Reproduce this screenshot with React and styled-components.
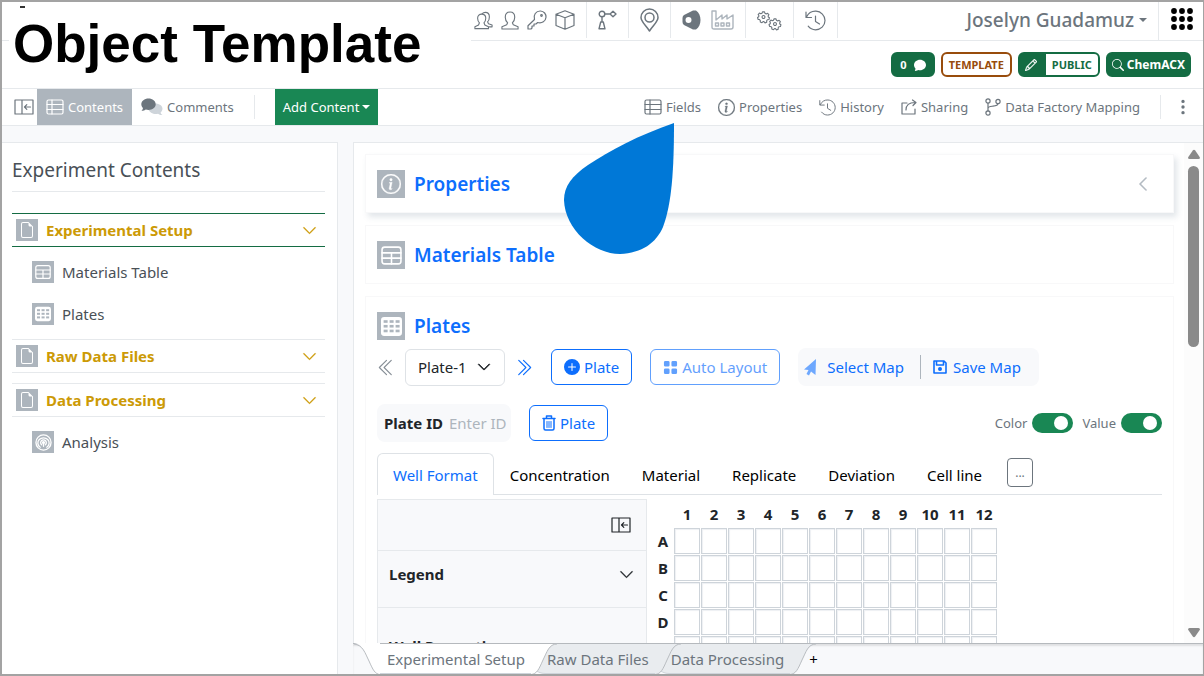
import React, { useState } from 'react';
import styled, { createGlobalStyle } from 'styled-components';
import {
    BsSearch,
    BsPencil,
    BsChatFill,
    BsChevronDown,
    BsChevronLeft,
    BsChevronDoubleLeft,
    BsChevronDoubleRight,
    BsPlusCircleFill,
    BsInfoCircle,
    BsThreeDotsVertical,
    BsGridFill,
    BsFileEarmark,
} from 'react-icons/bs';

const colors = {
    frame: '#a3a3a3',
    line: '#e6e9ec',
    gray: '#6c757d',
    iconBg: '#adb5bd',
    light: '#f8f9fb',
    green: '#198754',
    darkGreen: '#146c43',
    gold: '#cc9a06',
    blue: '#0d6efd',
    text: '#212529',
};

const GlobalStyle = createGlobalStyle`
    * { box-sizing: border-box; }
    body {
        margin: 0;
        background: #ffffff;
        color: ${colors.text};
        font-family: "Noto Sans", "Open Sans", sans-serif;
        font-size: 15px;
    }
    button, input, select { font: inherit; color: inherit; }
    button { cursor: pointer; }
    svg { display: block; flex: none; }
    h1, h2, h3, ul { margin: 0; padding: 0; }
`;

const Frame = styled.div`
    height: 100vh;
    display: flex;
    flex-direction: column;
    overflow: hidden;
    position: relative;
    border: 2px solid ${colors.frame};
    border-right-width: 1px;
`;

/* top navigation */

const Nav = styled.nav`
    height: 39px;
    flex: none;
    display: flex;
    padding-left: 461px;
    border-bottom: 1px solid ${colors.line};
    color: ${colors.gray};
`;

const NavGroup = styled.div`
    height: 36px;
    display: flex;
    align-items: center;
    gap: ${(props) => props.$gap || 0}px;
    padding: 0 11px;
    border-right: 1px solid ${colors.line};
`;

const IconButton = styled.button`
    display: flex;
    align-items: center;
    padding: 0;
    border: none;
    background: transparent;
    color: ${(props) => props.$color || 'inherit'};
`;

const UserButton = styled.button`
    display: flex;
    align-items: center;
    gap: 5px;
    margin-left: auto;
    padding: 0 11px 3px;
    border: none;
    border-right: 1px solid ${colors.line};
    background: transparent;
    font-size: 19px;
    font-weight: 500;
`;

const AppsButton = styled(IconButton)`
    padding: 0 10px 4px 12px;
    color: #000000;
`;

const Caret = styled.span`
    border-top: 4px solid currentColor;
    border-left: 4px solid transparent;
    border-right: 4px solid transparent;
`;

const TitleBox = styled.header`
    position: absolute;
    top: 2px;
    left: 7px;
    width: 462px;
    padding: 12px 4px;
    background: #ffffff;
    color: #000000;
    font-family: "Liberation Sans", Arial, sans-serif;
    line-height: 56px;
    h1 { font-size: 53px; font-weight: 700; white-space: nowrap; }
`;

const TitleMark = styled.span`
    position: absolute;
    top: 2px;
    left: 11px;
    width: 5px;
    height: 2px;
    background: #333333;
`;

const BadgeRow = styled.div`
    height: 48px;
    flex: none;
    display: flex;
    align-items: center;
    justify-content: flex-end;
    gap: 6px;
    padding-right: 12px;
    border-bottom: 1px solid ${colors.line};
`;

const Badge = styled.button`
    height: 25px;
    display: flex;
    align-items: center;
    gap: ${(props) => props.$gap || 4}px;
    padding: 0 ${(props) => props.$pad || 6}px;
    border: 2px solid ${(props) => props.$color || colors.darkGreen};
    border-radius: 6px;
    background: ${(props) => (props.$outline ? '#ffffff' : colors.darkGreen)};
    color: ${(props) => (props.$outline ? props.$color : '#ffffff')};
    font-size: ${(props) => props.$size || 11}px;
    font-weight: 700;
    line-height: 20px;
`;

const PublicBadge = styled(Badge)`
    padding: 0 0 0 5px;
`;

const BadgeLabel = styled.span`
    padding: 0 6px;
    border-radius: 0 4px 4px 0;
    background: #ffffff;
    color: ${colors.darkGreen};
    line-height: 21px;
`;

/* toolbar */

const Toolbar = styled.div`
    height: 37px;
    flex: none;
    display: flex;
    align-items: stretch;
    padding: 0 11px 0 12px;
    border-bottom: 1px solid ${colors.line};
    color: ${colors.gray};
`;

const ToolButton = styled.button`
    display: flex;
    align-items: center;
    gap: 4px;
    padding: 0 9px;
    border: none;
    background: ${(props) => (props.$active ? colors.iconBg : 'transparent')};
    color: ${(props) => (props.$active ? '#ffffff' : 'inherit')};
    font-size: 13px;
    white-space: nowrap;
`;

const LinkButton = styled(ToolButton)`
    padding: 0;
`;

const PanelToggle = styled(IconButton)`
    margin-right: 3px;
`;

const AddButton = styled(ToolButton)`
    gap: 3px;
    margin-left: 20px;
    padding: 0 8px;
    background: ${colors.green};
    color: #ffffff;
`;

const Divider = styled.span`
    width: 1px;
    height: 24px;
    align-self: center;
    margin-left: ${(props) => props.$before || 0}px;
    margin-right: ${(props) => props.$after || 0}px;
    background: ${(props) => props.$color || colors.line};
`;

const ToolLinks = styled.div`
    display: flex;
    gap: 17px;
    margin-left: auto;
`;

/* body */

const Body = styled.div`
    flex: 1;
    min-height: 0;
    display: grid;
    grid-template-columns: 336px minmax(0, 1fr);
    gap: 15px;
    padding-top: 16px;
    background: ${colors.light};
`;

const Sidebar = styled.aside`
    padding: 14px 12px 0 10px;
    border-top: 1px solid ${colors.line};
    border-right: 1px solid ${colors.line};
    background: #ffffff;
    color: #495057;
`;

const SidebarTitle = styled.h2`
    padding-bottom: 7px;
    margin-bottom: 21px;
    border-bottom: 1px solid ${colors.line};
    font-size: 19px;
    font-weight: 400;
    line-height: 27px;
`;

const Section = styled.button`
    width: 100%;
    height: 34px;
    display: flex;
    align-items: center;
    gap: 8px;
    padding: 0 8px 0 4px;
    border: solid ${(props) => (props.$active ? colors.darkGreen : colors.line)};
    border-width: 1px 0;
    background: transparent;
    color: ${colors.gold};
    font-weight: 700;
    > svg { margin-left: auto; }
`;

const SubItems = styled.ul`
    padding: 4px 0 ${(props) => props.$bottom}px 20px;
    list-style: none;
`;

const SubItem = styled.li`
    a {
        height: 42px;
        display: flex;
        align-items: center;
        gap: 8px;
        color: inherit;
        text-decoration: none;
    }
`;

const IconTile = styled.span`
    width: ${(props) => props.$size}px;
    height: ${(props) => props.$size}px;
    flex: none;
    display: flex;
    align-items: center;
    justify-content: center;
    background: ${colors.iconBg};
    color: #ffffff;
`;

const SpacedSection = styled(Section)`
    margin-top: 10px;
`;

const Content = styled.main`
    min-height: 0;
    display: grid;
    grid-template-rows: minmax(0, 1fr) 31px;
`;

const Panel = styled.div`
    min-height: 0;
    display: grid;
    grid-template-columns: minmax(0, 1fr) 19px;
    border-top: 1px solid ${colors.line};
    border-left: 1px solid ${colors.line};
    background: #ffffff;
`;

const Scroll = styled.div`
    min-height: 0;
    overflow: hidden;
    display: flex;
    flex-direction: column;
    gap: 12px;
    padding: 11px 10px 0 11px;
`;

const Card = styled.section`
    flex: none;
    padding: 15px 11px 14px;
    border: 1px solid #f8f8f9;
    box-shadow: ${(props) => (props.$raised ? '3px 4px 6px rgba(73, 100, 125, 0.16)' : 'none')};
`;

const CardHead = styled.div`
    display: flex;
    align-items: center;
    gap: 9px;
    color: ${colors.iconBg};
    h3 {
        margin-right: auto;
        color: ${colors.blue};
        font-size: 19px;
        font-weight: 600;
        line-height: 28px;
    }
    button { margin-right: 11px; }
`;

const ScrollBar = styled.div`
    display: flex;
    flex-direction: column;
    align-items: center;
    padding: 6px 0 5px;
    background: #fcfcfc;
    color: #8a8a8a;
`;

const Thumb = styled.span`
    width: 11px;
    flex: 0 0 37%;
    margin: 7px 0 auto;
    border-radius: 6px;
    background: #8a8a8a;
`;

/* plates */

const Row = styled.div`
    display: flex;
    align-items: center;
    height: 38px;
    margin-top: ${(props) => props.$top}px;
    color: ${colors.blue};
`;

const SelectBox = styled.label`
    display: flex;
    align-items: center;
    width: 100px;
    height: 37px;
    margin: 0 9px;
    position: relative;
    color: ${colors.text};
    select {
        width: 100%;
        height: 100%;
        padding: 0 12px;
        appearance: none;
        border: 1px solid #dee2e6;
        border-radius: 6px;
        background: #ffffff;
    }
    svg {
        position: absolute;
        right: 14px;
        pointer-events: none;
    }
`;

const OutlineButton = styled.button`
    display: flex;
    align-items: center;
    gap: 4px;
    height: 36px;
    margin-left: 18px;
    padding: 0 12px;
    border: 1px solid currentColor;
    border-radius: 6px;
    background: #ffffff;
    color: ${colors.blue};
    opacity: ${(props) => (props.$muted ? 0.65 : 1)};
    white-space: nowrap;
`;

const MapGroup = styled.div`
    height: 38px;
    display: flex;
    align-items: center;
    margin-left: 18px;
    padding: 0 18px 0 6px;
    border-radius: 8px;
    background: ${colors.light};
`;

const MapButton = styled.button`
    display: flex;
    align-items: center;
    gap: ${(props) => props.$gap}px;
    padding: 0;
    border: none;
    background: transparent;
    white-space: nowrap;
`;

const IdField = styled.label`
    height: 38px;
    display: flex;
    align-items: center;
    gap: 6px;
    padding: 0 4px 0 7px;
    border-radius: 8px;
    background: ${colors.light};
    color: ${colors.text};
    font-weight: 700;
    white-space: nowrap;
    input {
        width: 58px;
        padding: 0;
        border: none;
        outline: none;
        background: transparent;
        font-weight: 400;
    }
    input::placeholder { color: #adb5bd; opacity: 1; }
`;

const Toggles = styled.div`
    display: flex;
    gap: 9px;
    margin-left: auto;
`;

const Toggle = styled.label`
    display: flex;
    align-items: center;
    gap: 5px;
    color: ${colors.gray};
    font-size: 13px;
    input {
        appearance: none;
        width: 41px;
        height: 20px;
        margin: 0;
        border-radius: 10px;
        background: ${(props) => (props.$on ? colors.green : colors.iconBg)};
    }
    input::before {
        content: '';
        display: block;
        width: 14px;
        height: 14px;
        margin: 3px ${(props) => (props.$on ? '5px 3px auto' : 'auto 3px 5px')};
        border-radius: 50%;
        background: #ffffff;
    }
`;

const Tabs = styled.div`
    display: flex;
    align-items: flex-start;
    height: 42px;
    margin-top: 11px;
    border-bottom: 1px solid #dee2e6;
`;

const Tab = styled.button`
    height: 42px;
    padding: 0 15px;
    border: 1px solid transparent;
    border-bottom: none;
    border-radius: 6px 6px 0 0;
    background: transparent;
    color: #000000;
    white-space: nowrap;
    ${(props) => props.$active && `
        border-color: #dee2e6;
        background: #ffffff;
        color: ${colors.blue};
    `}
`;

const MoreButton = styled.button`
    width: 26px;
    height: 29px;
    margin: 5px 0 0 9px;
    padding: 0;
    border: 1px solid ${colors.gray};
    border-radius: 4px;
    background: #ffffff;
    color: ${colors.gray};
    font-size: 12px;
`;

const Designer = styled.div`
    display: flex;
    align-items: flex-start;
    gap: 5px;
    margin-top: 4px;
`;

const Legend = styled.div`
    width: 270px;
    border: 1px solid ${colors.line};
    background: ${colors.light};
`;

const LegendRow = styled.div`
    height: ${(props) => props.$height}px;
    display: flex;
    align-items: center;
    justify-content: space-between;
    padding: 0 ${(props) => props.$right || 12}px ${(props) => props.$bottom || 0}px 11px;
    border-bottom: 1px solid ${colors.line};
    font-weight: 700;
`;

const WellTable = styled.table`
    border-spacing: 1px;
    th {
        height: 26px;
        padding: 0;
        font-weight: 700;
        line-height: 24px;
        text-align: center;
    }
    thead th { height: 27px; }
    td {
        width: 26px;
        height: 26px;
        padding: 0;
        border: 1px solid #ced4da;
        box-shadow: inset 1px 1px 1px #eef0f3;
    }
    tbody th { width: 20px; }
`;

/* sheets */

const Sheets = styled.div`
    display: flex;
    border-top: 1px solid #b5b9bd;
    padding-left: 1px;
    background: ${colors.light};
    box-shadow: inset 0 2px 2px rgba(0, 0, 0, 0.1);
`;

const SheetTab = styled.button`
    padding: 0 6px 0 ${(props) => (props.$active ? 7 : 16)}px;
    margin-left: ${(props) => (props.$active ? 0 : -26)}px;
    border: none;
    border-bottom: 1px solid #ced4da;
    border-bottom-left-radius: ${(props) => (props.$active ? 0 : 14)}px;
    background: ${(props) => (props.$active ? '#ffffff' : '#e9ecef')};
    color: ${colors.gray};
    white-space: nowrap;
`;

const EdgeSvg = styled.svg`
    position: relative;
    z-index: 1;
    margin-top: -1px;
    pointer-events: none;
`;

const AddSheet = styled.button`
    margin-left: -7px;
    padding: 0;
    border: none;
    background: transparent;
    color: #000000;
`;

const Drop = styled.svg`
    position: absolute;
    top: 121px;
    left: 562px;
`;

/* icons */

const Line = ({ w, h = w, box, sw = 1.2, children }) => (
    <svg width={w} height={h} viewBox={box || `0 0 ${w} ${h}`} fill="none" stroke="currentColor" strokeWidth={sw} strokeLinejoin="round" strokeLinecap="round">
        {children}
    </svg>
);

const User = () => (
    <Line w={18} h={19} box="0 0 19 20">
        <path d="M1 19v-2.500l5-2 1-2c-1.500-1.500-2.500-3.500-2.500-6C4.500 3 6.500 1 9.500 1s5 2 5 5.500c0 2.500-1 4.500-2.500 6l1 2 5 2V19z" />
    </Line>
);

const Users = () => (
    <Line w={19} h={19} box="0 0 21 20">
        <path d="M1 19v-2l4-2 1-2.500C4.500 11 4 9.500 4 7.500c0-3 2-4.500 4.500-4.500S13 4.500 13 7.500c0 2-.5 3.500-2 5l1 2.500 4 2v2z" />
        <path d="M9 2.500C10 1.500 11 1 12.500 1 15.500 1 17 3 17 6c0 2.500-.5 4-2 5.500l1 2 4 1.500v2h-3" />
    </Line>
);

const Key = () => (
    <Line w={20} h={20}>
        <path d="M7.500 9.500C6 5 9 .8 13.500 1 17 1.200 19.200 4 19 7.300c-.3 3.900-4 6.400-8.300 5.200L9 14H7v2H5v2l-1 1H1v-3.200z" />
        <circle cx="14.500" cy="5.500" r="0.800" />
    </Line>
);

const Cube = () => (
    <Line w={20} h={20}>
        <path d="M10 .8l9 3.400v11.300l-9 3.700-9-3.700V4.200zM1 4.200l9 3.600 9-3.600M10 7.800v11.400" />
    </Line>
);

const Flow = () => (
    <Line w={19} h={20} sw={1.400}>
        <circle cx="4" cy="4" r="2.800" />
        <path d="M6.800 4H12M15 1.200L18 4l-3 2.800L12 4zM4 6.800v5M2.700 12h2.600L7 18.800H1z" />
    </Line>
);

const Pin = () => (
    <Line w={19} h={24} sw={1.500}>
        <path d="M9.500 23C5 16.500 1 13.500 1 9.500a8.500 8.500 0 0 1 17 0c0 4-4 7-8.500 13.500z" />
        <circle cx="9.500" cy="9.500" r="4.500" />
    </Line>
);

const Reader = () => (
    <svg width="19" height="20" viewBox="0 0 19 20" fill="currentColor">
        <path fillRule="evenodd" d="M11 .5h3c6 4 6 15 0 19h-3L2 15Q.5 14 .5 12V8Q.5 6 2 5zM6.500 7a3 3 0 1 0 0 6 3 3 0 0 0 0-6z" />
    </svg>
);

const Factory = () => (
    <Line w={23} h={20} sw={1.400}>
        <path d="M1 1h4v9l6-5v4l5-4v4l6-4v12q0 2-2 2H3q-2 0-2-2z" />
        <path d="M4.500 13h3v3h-3zM10 13h3v3h-3zM15.500 13h3v3h-3z" />
    </Line>
);

const gear = 'M-1.200-6h2.400l.5 1.700 1.500.7 1.600-.8 1.500 1.700-.9 1.500.3 1.200 1.300.8-.6 2.200-1.700.2-1 1.200.1 1.700-2 .8L.500 5.500h-1l-1.300 1.200-2-.8.1-1.700-1-1.200-1.700-.2-.6-2.200 1.300-.8.3-1.200-.9-1.500 1.500-1.700 1.600.8 1.500-.7z';

const Gears = () => (
    <Line w={25} h={21} sw={1.300}>
        <g transform="translate(6.500 7) scale(0.850)"><path d={gear} /><circle r="1.700" /></g>
        <g transform="translate(18 14) scale(0.850)"><path d={gear} /><circle r="1.700" /></g>
    </Line>
);

const History = ({ size = 21 }) => (
    <Line w={size} box="0 0 21 21">
        <path d="M1 2v5.500h5.500M1.500 7C3.500 3 7 1 11 1.200c5 .2 9 4.300 9 9.300 0 5.300-4.300 9.300-9.500 9.300-3 0-5.500-1.300-7.300-3.600M10.500 6v5.500l4 2.500" />
    </Line>
);

const Apps = () => (
    <svg width="22" height="22" viewBox="0 0 22 22" fill="currentColor">
        {[3, 11, 19].map((y) => [3, 11, 19].map((x) => <circle key={x + '-' + y} cx={x} cy={y} r="2.900" />))}
    </svg>
);

const PanelIcon = () => (
    <Line w={20} h={16}>
        <path d="M1 1h18v14H1zM8 1v14M16.500 8H10.500M12.800 5.700L10.500 8l2.300 2.300" />
    </Line>
);

const ListIcon = () => (
    <Line w={18} h={16}>
        <rect x="1" y="1" width="16" height="14" rx="1.500" />
        <path d="M1 5.500h16M1 10.500h16M6 1v14" />
    </Line>
);

const Comments = () => (
    <svg width="22" height="18" viewBox="0 0 22 18">
        <path fill="#ced4da" d="M14 5.500c4.500 0 7.500 2.300 7.500 5.200 0 1.500-.8 2.800-1.900 3.700.2 1 .9 1.800 1.900 2.600-1.800.2-3.200-.3-4.500-1.200-4.600.8-8.500-1.300-9.500-4.300z" />
        <path fill="#6c757d" d="M7.500.5c4 0 7.200 2.600 7.200 5.800s-3.200 5.700-7.200 5.700c-1 0-1.900-.1-2.700-.4C3.500 12.600 2 13 .5 12.800 1.400 12 1.900 11 2 10 .9 9 .3 7.800.3 6.300.3 3.100 3.500.5 7.500.5z" />
    </svg>
);

const ShareIcon = () => (
    <Line w={16} h={16}>
        <path d="M6 4H1v11h13v-5M5 11c0-5 3-7.500 9-7.500M11.500 1L15 3.500 12 6.500" />
    </Line>
);

const Branch = () => (
    <Line w={16} h={18}>
        <circle cx="3" cy="3" r="2.100" /><circle cx="3" cy="15" r="2.100" /><circle cx="13" cy="3.500" r="2.100" />
        <path d="M3 5.200v7.700M3 10.500c0-2 2-2 5-2.300 3.500-.3 5-.7 5-2.600" />
    </Line>
);

const TableIcon = ({ size }) => (
    <Line w={size} sw={1.500} box="0 0 20 18">
        <rect x="1" y="1" width="18" height="16" rx="2.500" />
        <path d="M1 6.500h18M1 11.500h18M10 6.500V17" />
    </Line>
);

const PlateIcon = ({ size }) => (
    <svg width={size} height={size} viewBox="0 0 20 18">
        <rect width="20" height="18" rx="3" fill="#ffffff" />
        {[3, 7.5, 12].map((y) => [2.5, 8.2, 13.9].map((x) => (
            <rect key={x + '-' + y} x={x} y={y} width="3.800" height="2.500" fill="#adb5bd" />
        )))}
    </svg>
);

const Target = () => (
    <Line w={17} sw={1.400} box="0 0 18 18">
        <circle cx="9" cy="9" r="8" />
        <path d="M5.500 14a6 5.500 0 1 1 7 0M7 11.500a3 3 0 1 1 4 0" />
        <circle cx="9" cy="9" r="1" fill="currentColor" />
        <path d="M9 10v3" />
    </Line>
);

const Trash = () => (
    <Line w={14} h={16} sw={1.500}>
        <path d="M1 3.500h12M4.500 3V1h5v2M2 4v9.500q0 1.500 1.500 1.500h7q1.500 0 1.500-1.500V4" />
        <path strokeWidth="1" d="M5 6.500v6M7 6.500v6M9 6.500v6" />
    </Line>
);

const Pointer = () => (
    <svg width="13" height="17" viewBox="0 0 13 17" fill="#6ea8fe">
        <path d="M12 0L0 10.500l4.500.5L2.500 15l2.500 1.500L7 12.500l4.500 3.500z" />
    </svg>
);

const Save = () => (
    <Line w={14} h={14} sw={1.600}>
        <path d="M1 1h10l2 2v10H1zM3.500 1v4h7V1" />
        <circle cx="7" cy="9" r="1.200" fill="currentColor" />
    </Line>
);

const Arrow = ({ down }) => (
    <svg width="12" height="10" viewBox="0 0 12 10" fill="currentColor">
        <path d={down ? 'M0 1.500Q0 0 1.500 0h9Q12 0 12 1.500L7.200 8.500Q6 10 4.800 8.500z' : 'M0 8.500Q0 10 1.500 10h9Q12 10 12 8.500L7.200 1.500Q6 0 4.800 1.500z'} />
    </svg>
);

const StartEdge = () => (
    <EdgeSvg width="26" height="32" viewBox="0 0 26 32">
        <path d="M0 0C9 1 11 10 15 18c4 9 6 13 11 13.500V0z" fill="#ffffff" />
        <path d="M0 1C9 2 11 10 15 18c4 9 6 13 11 13.500" fill="none" stroke="#b9bdc1" />
    </EdgeSvg>
);

const EndEdge = ({ fill }) => (
    <EdgeSvg width="26" height="32" viewBox="0 0 26 32">
        <path d="M0 1H26C18 1 16 9 12 17 8 26 6 31 0 31.500z" fill={fill} />
        <path d="M26 1C18 1 16 9 12 17 8 26 6 31 0 31.500" fill="none" stroke="#b9bdc1" />
    </EdgeSvg>
);

const columns = [1, 2, 3, 4, 5, 6, 7, 8, 9, 10, 11, 12];
const rows = ['A', 'B', 'C', 'D', 'E'];
const tabs = ['Well Format', 'Concentration', 'Material', 'Replicate', 'Deviation', 'Cell line'];
const sheets = ['Experimental Setup', 'Raw Data Files', 'Data Processing'];

const TopNav = () => (
    <Nav>
        <NavGroup $gap={8}>
            <IconButton aria-label="Groups"><Users /></IconButton>
            <IconButton aria-label="Users"><User /></IconButton>
            <IconButton aria-label="Roles"><Key /></IconButton>
            <IconButton aria-label="Objects"><Cube /></IconButton>
        </NavGroup>
        <NavGroup>
            <IconButton aria-label="Workflows"><Flow /></IconButton>
        </NavGroup>
        <NavGroup>
            <IconButton aria-label="Locations"><Pin /></IconButton>
        </NavGroup>
        <NavGroup $gap={10}>
            <IconButton aria-label="Readers"><Reader /></IconButton>
            <IconButton aria-label="Data factory" $color={colors.iconBg}><Factory /></IconButton>
        </NavGroup>
        <NavGroup>
            <IconButton aria-label="Settings"><Gears /></IconButton>
        </NavGroup>
        <NavGroup>
            <IconButton aria-label="Audit history"><History /></IconButton>
        </NavGroup>
        <UserButton>Joselyn Guadamuz <Caret /></UserButton>
        <AppsButton aria-label="Apps"><Apps /></AppsButton>
    </Nav>
);

const MainToolbar = () => (
    <Toolbar>
        <PanelToggle aria-label="Collapse contents"><PanelIcon /></PanelToggle>
        <ToolButton $active><ListIcon />Contents</ToolButton>
        <ToolButton><Comments />Comments</ToolButton>
        <Divider $before={11} />
        <AddButton>Add Content <Caret /></AddButton>
        <ToolLinks>
            <LinkButton><ListIcon />Fields</LinkButton>
            <LinkButton><BsInfoCircle size={17} strokeWidth={0.3} />Properties</LinkButton>
            <LinkButton><History size={17} />History</LinkButton>
            <LinkButton><ShareIcon />Sharing</LinkButton>
            <LinkButton><Branch />Data Factory Mapping</LinkButton>
        </ToolLinks>
        <Divider $before={20} $after={13} />
        <IconButton aria-label="More actions"><BsThreeDotsVertical size={18} /></IconButton>
    </Toolbar>
);

const ContentsTree = () => (
    <Sidebar>
        <SidebarTitle>Experiment Contents</SidebarTitle>
        <Section $active>
            <IconTile $size={22}><BsFileEarmark size={16} /></IconTile>
            Experimental Setup
            <BsChevronDown size={15} strokeWidth={0.4} />
        </Section>
        <SubItems $bottom={4}>
            <SubItem><a href="#materials"><IconTile $size={22}><TableIcon size={16} /></IconTile>Materials Table</a></SubItem>
            <SubItem><a href="#plates"><IconTile $size={22}><PlateIcon size={16} /></IconTile>Plates</a></SubItem>
        </SubItems>
        <Section>
            <IconTile $size={22}><BsFileEarmark size={16} /></IconTile>
            Raw Data Files
            <BsChevronDown size={15} strokeWidth={0.4} />
        </Section>
        <SpacedSection>
            <IconTile $size={22}><BsFileEarmark size={16} /></IconTile>
            Data Processing
            <BsChevronDown size={15} strokeWidth={0.4} />
        </SpacedSection>
        <SubItems $bottom={0}>
            <SubItem><a href="#analysis"><IconTile $size={22}><Target /></IconTile>Analysis</a></SubItem>
        </SubItems>
    </Sidebar>
);

const PlatesCard = () => {
    const [tab, setTab] = useState(tabs[0]);
    const [color, setColor] = useState(true);
    const [value, setValue] = useState(true);

    return (
        <Card id="plates">
            <CardHead>
                <IconTile $size={28}><PlateIcon size={21} /></IconTile>
                <h3>Plates</h3>
            </CardHead>
            <Row $top={8}>
                <IconButton aria-label="Previous plate" $color="#868e96"><BsChevronDoubleLeft size={19} /></IconButton>
                <SelectBox>
                    <select aria-label="Plate">
                        <option>Plate-1</option>
                    </select>
                    <BsChevronDown size={14} strokeWidth={0.8} />
                </SelectBox>
                <IconButton aria-label="Next plate"><BsChevronDoubleRight size={19} /></IconButton>
                <OutlineButton><BsPlusCircleFill size={16} />Plate</OutlineButton>
                <OutlineButton $muted><BsGridFill size={15} />Auto Layout</OutlineButton>
                <MapGroup>
                    <MapButton $gap={10}><Pointer />Select Map</MapButton>
                    <Divider $before={16} $after={12} $color={colors.iconBg} />
                    <MapButton $gap={6}><Save />Save Map</MapButton>
                </MapGroup>
            </Row>
            <Row $top={18}>
                <IdField>
                    Plate ID
                    <input type="text" placeholder="Enter ID" />
                </IdField>
                <OutlineButton><Trash />Plate</OutlineButton>
                <Toggles>
                    <Toggle $on={color}>
                        Color
                        <input type="checkbox" checked={color} onChange={() => setColor(!color)} />
                    </Toggle>
                    <Toggle $on={value}>
                        Value
                        <input type="checkbox" checked={value} onChange={() => setValue(!value)} />
                    </Toggle>
                </Toggles>
            </Row>
            <Tabs>
                {tabs.map((name) => (
                    <Tab key={name} $active={name === tab} onClick={() => setTab(name)}>{name}</Tab>
                ))}
                <MoreButton aria-label="More tabs">...</MoreButton>
            </Tabs>
            <Designer>
                <Legend>
                    <LegendRow $height={51} $right={15}>
                        <span />
                        <IconButton aria-label="Collapse legend"><PanelIcon /></IconButton>
                    </LegendRow>
                    <LegendRow $height={57} $bottom={10}>
                        Legend
                        <BsChevronDown size={15} strokeWidth={0.4} />
                    </LegendRow>
                    <LegendRow $height={76}>Well Properties</LegendRow>
                </Legend>
                <WellTable>
                    <thead>
                        <tr>
                            <th />
                            {columns.map((col) => <th key={col}>{col}</th>)}
                        </tr>
                    </thead>
                    <tbody>
                        {rows.map((row) => (
                            <tr key={row}>
                                <th>{row}</th>
                                {columns.map((col) => <td key={col} />)}
                            </tr>
                        ))}
                    </tbody>
                </WellTable>
            </Designer>
        </Card>
    );
};

const App = () => {
    const [sheet, setSheet] = useState(sheets[0]);

    return (
        <Frame>
            <GlobalStyle />
            <TopNav />
            <TitleBox>
                <TitleMark />
                <h1>Object Template</h1>
            </TitleBox>
            <BadgeRow>
                <Badge $gap={7} $pad={7}>0 <BsChatFill size={12} /></Badge>
                <Badge $outline $color="#984c0c" $pad={6}>TEMPLATE</Badge>
                <PublicBadge $gap={9}>
                    <BsPencil size={12} strokeWidth={0.5} />
                    <BadgeLabel>PUBLIC</BadgeLabel>
                </PublicBadge>
                <Badge $pad={4} $gap={3} $size={12}><BsSearch size={12} />ChemACX</Badge>
            </BadgeRow>
            <MainToolbar />
            <Body>
                <ContentsTree />
                <Content>
                    <Panel>
                        <Scroll>
                            <Card $raised>
                                <CardHead>
                                    <IconTile $size={28}><BsInfoCircle size={20} strokeWidth={0.3} /></IconTile>
                                    <h3>Properties</h3>
                                    <IconButton aria-label="Expand properties"><BsChevronLeft size={16} strokeWidth={0.6} /></IconButton>
                                </CardHead>
                            </Card>
                            <Card id="materials">
                                <CardHead>
                                    <IconTile $size={28}><TableIcon size={21} /></IconTile>
                                    <h3>Materials Table</h3>
                                </CardHead>
                            </Card>
                            <PlatesCard />
                        </Scroll>
                        <ScrollBar>
                            <Arrow />
                            <Thumb />
                            <Arrow down />
                        </ScrollBar>
                    </Panel>
                    <Sheets>
                        <StartEdge />
                        {sheets.map((name) => (
                            <React.Fragment key={name}>
                                <SheetTab $active={name === sheet} onClick={() => setSheet(name)}>{name}</SheetTab>
                                <EndEdge fill={name === sheet ? '#ffffff' : '#e9ecef'} />
                            </React.Fragment>
                        ))}
                        <AddSheet aria-label="Add sheet">+</AddSheet>
                    </Sheets>
                </Content>
            </Body>
            <Drop width="111" height="132" viewBox="0 0 111 132">
                <path d="M110 0C75 12 45 28 24 42 8 53 0 63 0 77c1 30 30 54 56 54 22-1 36-11 43-27 9-24 11-59 11-104z" fill="#0078d7" />
            </Drop>
        </Frame>
    );
};

export default App;
